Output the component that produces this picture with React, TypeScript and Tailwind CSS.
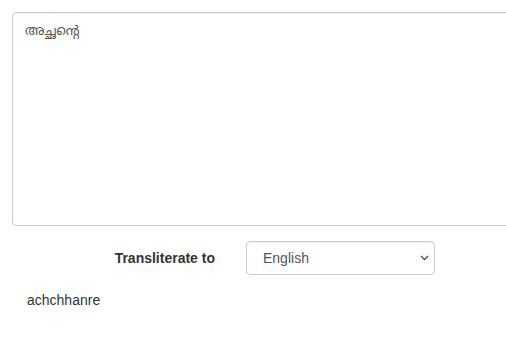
import { useState } from 'react';

export default function App() {
  const [source, setSource] = useState('അച്ഛന്റെ');
  const [target, setTarget] = useState('English');

  return (
    <div className="w-[506px] h-[346px] overflow-hidden bg-white font-['Liberation_Sans',Arial,sans-serif] text-[#333]">
      {/* Source text */}
      <div className="pl-3 pt-3">
        <textarea
          value={source}
          onChange={(e) => setSource(e.target.value)}
          className="block w-[560px] h-[214px] resize-none rounded-[4px] border border-[#ccc] px-3 py-[9px] text-[13px] leading-[20px] text-[#555] outline-none shadow-[inset_0_1px_1px_rgba(0,0,0,0.075)] font-['Noto_Sans_Malayalam','Noto_Sans','DejaVu_Sans',sans-serif]"
        />
      </div>

      {/* Target language */}
      <div className="flex items-center mt-[15px]">
        <label className="w-[215px] text-right font-bold text-[14px]">
          Transliterate to
        </label>
        <div className="ml-[31px] relative">
          <select
            value={target}
            onChange={(e) => setTarget(e.target.value)}
            className="appearance-none w-[189px] h-[34px] rounded-[4px] border border-[#ccc] bg-white pl-4 pr-8 text-[14px] text-[#555] outline-none shadow-[inset_0_1px_1px_rgba(0,0,0,0.075)]"
          >
            <option>English</option>
            <option>Malayalam</option>
          </select>
          <svg
            className="pointer-events-none absolute right-[6px] top-[14px]"
            width="9"
            height="6"
            viewBox="0 0 9 6"
            fill="none"
          >
            <path d="M1 1l3.5 3.5L8 1" stroke="#555" strokeWidth="1.4" />
          </svg>
        </div>
      </div>

      {/* Result */}
      <p className="mt-[15px] pl-[27px] text-[14px] leading-[20px]">achchhanre</p>
    </div>
  );
}
